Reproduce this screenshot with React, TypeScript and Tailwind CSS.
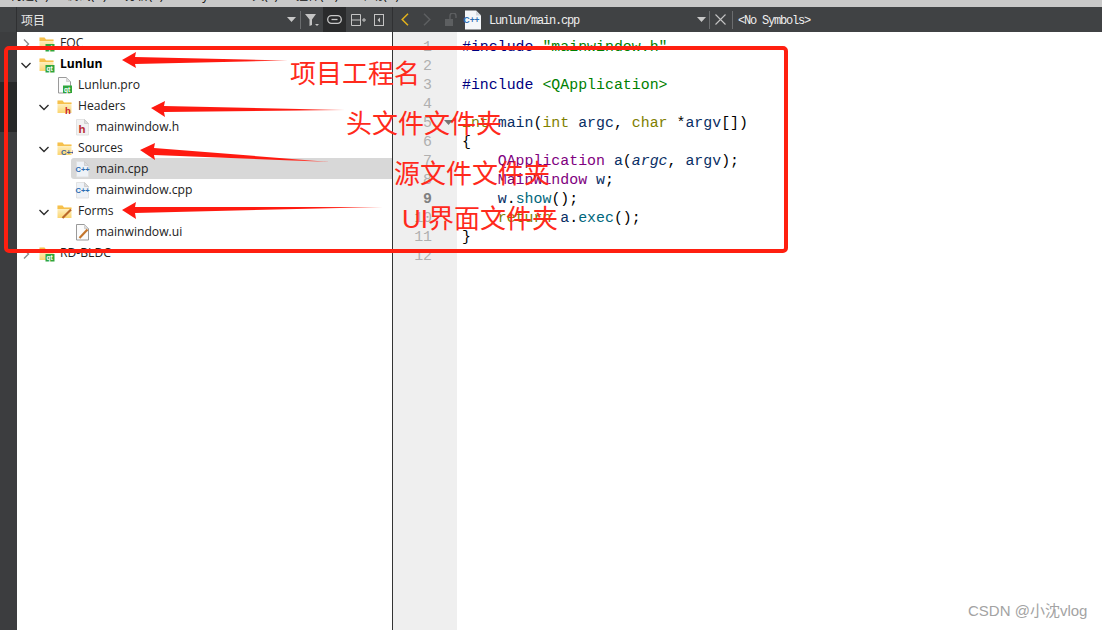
import React from "react";

const Qt = ({ x, y }: { x: number; y: number }) => (
  <g>
    <rect x={x} y={y} width="9" height="7.5" fill="#2fa53c" />
    <text x={x + 1} y={y + 6} fontSize="6.5" fontWeight="700" fill="#fff" fontFamily="Liberation Sans, sans-serif">qt</text>
  </g>
);

const Folder = ({ badge }: { badge: "qt" | "h" | "c" | "form" }) => (
  <svg width="16" height="16" viewBox="0 0 16 16" className="shrink-0">
    <defs>
      <linearGradient id="fold" x1="0" y1="0" x2="0" y2="1">
        <stop offset="0" stopColor="#fff8dc" />
        <stop offset="1" stopColor="#fbd56f" />
      </linearGradient>
    </defs>
    <path d="M0.5 1.5 L5.5 1.5 L7 3.5 L14.5 3.5 L14.5 14 L0.5 14 Z" fill="url(#fold)" />
    <path d="M0.5 1.5 L5.5 1.5 L7 3.5 L14.5 3.5 L14.5 5 L0.5 5 Z" fill="#f6c04c" />
    {badge === "qt" && <Qt x={6.5} y={8} />}
    {badge === "h" && <text x="8" y="14.5" fontSize="9.5" fontWeight="700" fill="#c8242c" fontFamily="Liberation Sans, sans-serif">h</text>}
    {badge === "c" && <text x="4" y="13.5" fontSize="7.5" fontWeight="700" fill="#3a5f94" fontFamily="Liberation Sans, sans-serif">C++</text>}
    {badge === "form" && <path d="M5.5 14 L14 5.5" stroke="#b9692a" strokeWidth="2.2" />}
  </svg>
);

const Doc = ({ kind }: { kind: "qt" | "h" | "c" | "form" }) => (
  <svg width="16" height="17" viewBox="0 0 16 17" className="shrink-0">
    <path d="M1.5 0.5 L9.5 0.5 L13.5 4.5 L13.5 16 L1.5 16 Z" fill={kind === "c" ? "#eef2f7" : kind === "h" ? "#f2f2f2" : "#fbfbfb"} stroke={kind === "form" || kind === "qt" ? "#8f8f8f" : "#e0e0e0"} strokeWidth="0.9" />
    <path d="M9.5 0.5 L9.5 4.5 L13.5 4.5 Z" fill="#dcdcdc" stroke="#c0c0c0" strokeWidth="0.6" />
    {kind === "qt" && <Qt x={6} y={8.5} />}
    {kind === "h" && <text x="3.5" y="14" fontSize="11.5" fontWeight="700" fill="#b92c35" fontFamily="Liberation Sans, sans-serif">h</text>}
    {kind === "c" && <text x="0.5" y="11" fontSize="7.5" fontWeight="700" fill="#2c6db3" fontFamily="Liberation Sans, sans-serif">C++</text>}
    {kind === "form" && <path d="M4.5 14 L12.5 5.5" stroke="#c4752b" strokeWidth="2.2" />}
  </svg>
);

const Chevron = ({ open, light }: { open: boolean; light?: boolean }) => (
  <svg width="12" height="12" viewBox="0 0 12 12" className="shrink-0">
    <path d={open ? "M1.5 4 L6 8.5 L10.5 4" : "M4 1.5 L8.5 6 L4 10.5"} fill="none" stroke={light ? "#8c8c8c" : "#2d2d2d"} strokeWidth="1.4" />
  </svg>
);

const Row0 = ({ name, open, bold, light }: { name: string; open: boolean; bold?: boolean; light?: boolean }) => (
  <div className="flex items-center h-[21px] pt-[2px] pl-[3px]">
    <Chevron open={open} light={light} />
    <span className="ml-[7px]"><Folder badge="qt" /></span>
    <span className={`ml-[5px] ${bold ? "font-bold text-black" : "text-[#222]"}`}>{name}</span>
  </div>
);

const Row1 = ({ name, badge }: { name: string; badge: "h" | "c" | "form" }) => (
  <div className="flex items-center h-[21px] pt-[2px] pl-[21px]">
    <Chevron open />
    <span className="ml-[7px]"><Folder badge={badge} /></span>
    <span className="ml-[5px] text-[#222]">{name}</span>
  </div>
);

const Row2 = ({ name, kind, selected }: { name: string; kind: "h" | "c" | "form"; selected?: boolean }) => (
  <div className={`flex items-center h-[21px] pt-[2px] ml-[54px] pl-[4px] rounded-l-[3px] ${selected ? "bg-[#d8d8d8]" : ""}`}>
    <Doc kind={kind} />
    <span className="ml-[5px] text-[#222]">{name}</span>
  </div>
);

const K = ({ c }: { c: string }) => <span className="text-[#808000]">{c}</span>;
const N = ({ c }: { c: string }) => <span className="text-[#092e64]">{c}</span>;
const T = ({ c }: { c: string }) => <span className="text-[#800080]">{c}</span>;
const F = ({ c }: { c: string }) => <span className="text-[#00677c]">{c}</span>;
const P = ({ c }: { c: string }) => <span className="text-[#000080]">{c}</span>;
const G = ({ c }: { c: string }) => <span className="text-[#008000]">{c}</span>;

const code: React.ReactNode[] = [
  <><P c="#include " /><G c={'"mainwindow.h"'} /></>,
  "",
  <><P c="#include " /><G c="<QApplication>" /></>,
  "",
  <><K c="int" /> <N c="main" />(<K c="int" /> <N c="argc" />, <K c="char" /> *<N c="argv" />[])</>,
  "{",
  <>    <T c="QApplication" /> <N c="a" />(<i className="text-[#092e64]">argc</i>, <N c="argv" />);</>,
  <>    <T c="MainWindow" /> <N c="w" />;</>,
  <>    <N c="w" />.<F c="show" />();</>,
  <>    <K c="return" /> <N c="a" />.<F c="exec" />();</>,
  "}",
  "",
];

const Arrow = ({ points, id, x1, x2 }: { points: string; id: string; x1: number; x2: number }) => (
  <>
    <linearGradient id={id} gradientUnits="userSpaceOnUse" x1={x1} y1="0" x2={x2} y2="0">
      <stop offset="0" stopColor="#ff1a10" />
      <stop offset="0.75" stopColor="#ff1a10" />
      <stop offset="1" stopColor="#ff6a60" />
    </linearGradient>
    <polygon points={points} fill={`url(#${id})`} />
  </>
);

const Label = ({ className, children }: { className: string; children: React.ReactNode }) => (
  <div className={`absolute text-[26px] leading-[32px] text-[#ff2a1c] whitespace-nowrap ${className}`} style={{ fontFamily: '"Liberation Sans", "Noto Sans CJK SC", sans-serif' }}>
    {children}
  </div>
);

const Sep = () => <div className="w-px h-[18px] bg-[#6b6d6f] shrink-0" />;
const Tri = () => <svg width="9" height="5" viewBox="0 0 9 5" className="shrink-0"><path d="M0 0 H9 L4.5 5 Z" fill="#c8c8c8" /></svg>;

export default function App() {
  return (
    <div className="relative w-[1102px] h-[630px] overflow-hidden bg-white flex flex-col" style={{ fontFamily: '"Open Sans", "Noto Sans CJK SC", sans-serif' }}>
      {/* clipped menu bar */}
      <div className="h-[7px] bg-[#c9c9c9] overflow-hidden shrink-0 flex text-[12px] leading-[16px] text-[#111] pl-[10px]">
        <div className="flex -mt-[12px] gap-[18px]">
          <span>构建(B)</span><span>调试(D)</span><span>分析(A)</span><span className="ml-[21px]">y</span><span className="ml-[14px]">工具(T)</span><span>控件(W)</span><span className="ml-[3px]">帮助(H)</span>
        </div>
      </div>

      {/* toolbar */}
      <div className="h-[25px] bg-[#404244] shrink-0 flex items-center text-[#e8e8e8]">
        <div className="w-[17px] h-full border-r border-[#2f3032] shrink-0" />
        <span className="ml-[4px] pt-[2px] text-[12px] w-[266px] shrink-0">项目</span>
        <Tri />
        <span className="ml-[4px]"><Sep /></span>
        <svg width="16" height="14" viewBox="0 0 16 14" className="ml-[4px] shrink-0"><path d="M0 1 H11 L7 6.5 V12 L4.5 13 V6.5 Z" fill="#c4c4c4" /><path d="M10 11 H14 L12 13 Z" fill="#c4c4c4" /></svg>
        <div className="ml-[2px] w-[23px] h-full bg-[#2a2b2c] flex items-center justify-center shrink-0">
          <svg width="15" height="9" viewBox="0 0 15 9"><rect x="0.7" y="0.7" width="13.6" height="7.6" rx="3.8" fill="none" stroke="#c8c8c8" strokeWidth="1.3" /><path d="M4.5 4.5 H10.5" stroke="#c8c8c8" strokeWidth="1.3" /></svg>
        </div>
        <svg width="15" height="12" viewBox="0 0 15 12" className="ml-[5px] shrink-0"><path d="M0.5 0.5 H9.5 V11.5 H0.5 Z M0.5 6 H9.5" fill="none" stroke="#c4c4c4" /><path d="M11 6 H15 M13 4 V8" stroke="#c4c4c4" /></svg>
        <svg width="10" height="12" viewBox="0 0 10 12" className="ml-[8px] shrink-0"><rect x="0.5" y="0.5" width="9" height="11" fill="none" stroke="#c4c4c4" /><path d="M6 3.5 L3.5 6 L6 8.5 Z" fill="#c4c4c4" /></svg>
        <div className="ml-[8px] w-px h-full bg-[#2f3032] shrink-0" />
        <svg width="8" height="13" viewBox="0 0 8 13" className="ml-[8px] shrink-0"><path d="M7 0.7 L1.2 6.5 L7 12.3" fill="none" stroke="#e2b21c" strokeWidth="1.5" /></svg>
        <svg width="8" height="13" viewBox="0 0 8 13" className="ml-[14px] shrink-0"><path d="M1 0.7 L6.8 6.5 L1 12.3" fill="none" stroke="#5d5f61" strokeWidth="1.5" /></svg>
        <svg width="13" height="13" viewBox="0 0 13 13" className="ml-[14px] shrink-0"><rect x="0" y="6" width="8" height="7" fill="#5d5f61" /><path d="M5 6 V3 A3 3 0 0 1 11 3 V5" fill="none" stroke="#5d5f61" strokeWidth="1.4" /></svg>
        <svg width="20" height="20" viewBox="0 0 20 20" className="ml-[5px] shrink-0">
          <path d="M2 0.5 H13 L18 5.5 V19.5 H2 Z" fill="#f4f6f9" />
          <path d="M13 0.5 V5.5 H18" fill="#d4d8dd" />
          <text x="0.5" y="13" fontSize="8.5" fontWeight="700" fill="#2c6db3" fontFamily="Liberation Sans, sans-serif">C++</text>
        </svg>
        <span className="ml-[6px] pt-[2px] text-[12px] tracking-[-1.2px] w-[208px] shrink-0 text-[#eeeeee]" style={{ fontFamily: '"Liberation Mono", monospace' }}>Lunlun/main.cpp</span>
        <Tri />
        <span className="ml-[3px]"><Sep /></span>
        <svg width="11" height="11" viewBox="0 0 11 11" className="ml-[5px] shrink-0"><path d="M0.5 0.5 L10.5 10.5 M10.5 0.5 L0.5 10.5" stroke="#c4c4c4" strokeWidth="1.1" /></svg>
        <span className="ml-[6px]"><Sep /></span>
        <span className="ml-[5px] pt-[2px] text-[12px] tracking-[-1.2px] text-[#eeeeee]" style={{ fontFamily: '"Liberation Mono", monospace' }}>&lt;No Symbols&gt;</span>
      </div>

      {/* body */}
      <div className="flex flex-1 min-h-0">
        <div className="w-[17px] shrink-0 bg-[#3c3d3f] flex flex-col">
          <div className="h-[50px]" />
          <div className="h-[50px] bg-[#272829]" />
        </div>
        <div className="w-[375px] shrink-0 text-[12.15px]">
          <Row0 name="FOC" open={false} light />
          <Row0 name="Lunlun" open bold />
          <div className="flex items-center h-[21px] pt-[2px] pl-[40px]">
            <Doc kind="qt" />
            <span className="ml-[5px] text-[#222]">Lunlun.pro</span>
          </div>
          <Row1 name="Headers" badge="h" />
          <Row2 name="mainwindow.h" kind="h" />
          <Row1 name="Sources" badge="c" />
          <Row2 name="main.cpp" kind="c" selected />
          <Row2 name="mainwindow.cpp" kind="c" />
          <Row1 name="Forms" badge="form" />
          <Row2 name="mainwindow.ui" kind="form" />
          <Row0 name="RD-BLDC" open={false} light />
        </div>
        <div className="w-px shrink-0 bg-[#333]" />
        <div className="w-[64px] shrink-0 bg-[#efefef] pt-[6px] relative text-[14.9px] leading-[19px] text-[#b0b0b0] text-right pr-[25px]" style={{ fontFamily: '"Liberation Mono", monospace' }}>
          {code.map((_, i) => (
            <div key={i} className={i === 8 ? "font-bold text-[#808080]" : ""}>{i + 1}</div>
          ))}
          <svg width="9" height="5" viewBox="0 0 9 5" className="absolute left-[51px] top-[88px]"><path d="M0 0 H9 L4.5 5 Z" fill="#777" /></svg>
        </div>
        <div className="flex-1 pt-[6px] pl-[6px] text-[14.9px] leading-[19px] text-black" style={{ fontFamily: '"Liberation Mono", monospace' }}>
          {code.map((line, i) => (
            <div key={i} className="h-[19px] whitespace-pre -ml-px">{line}</div>
          ))}
        </div>
      </div>

      {/* annotations drawn over the screenshot */}
      <div className="absolute left-[4px] top-[46px] w-[784px] h-[207px] border-4 border-[#ff1f10] rounded-[5px]" />
      <svg width="1102" height="630" className="absolute left-0 top-0 pointer-events-none">
        <Arrow id="a1" x1={122} x2={288} points="122,60 136,52 135,57 288,60.5 135,64 136,68" />
        <Arrow id="a2" x1={151} x2={345} points="151,108 165,101 164,106 345,110 164,112 165,117" />
        <Arrow id="a3" x1={140} x2={330} points="140,150 155,143 154,148 330,162 154,155 155,160" />
        <Arrow id="a4" x1={122} x2={383} points="122,210 136,202 135,207 383,207 135,213 136,219" />
      </svg>
      <Label className="left-[290px] top-[58px]">项目工程名</Label>
      <Label className="left-[346px] top-[108px]">头文件文件夹</Label>
      <Label className="left-[394px] top-[158px]">源文件文件夹</Label>
      <Label className="left-[402px] top-[203px]">UI界面文件夹</Label>
      <div className="absolute left-[968px] top-[602px] text-[15px] leading-[18px] text-[#a3a3a3] whitespace-nowrap" style={{ fontFamily: '"Liberation Sans", "Noto Sans CJK SC", sans-serif' }}>
        CSDN @小沈vlog
      </div>
    </div>
  );
}
